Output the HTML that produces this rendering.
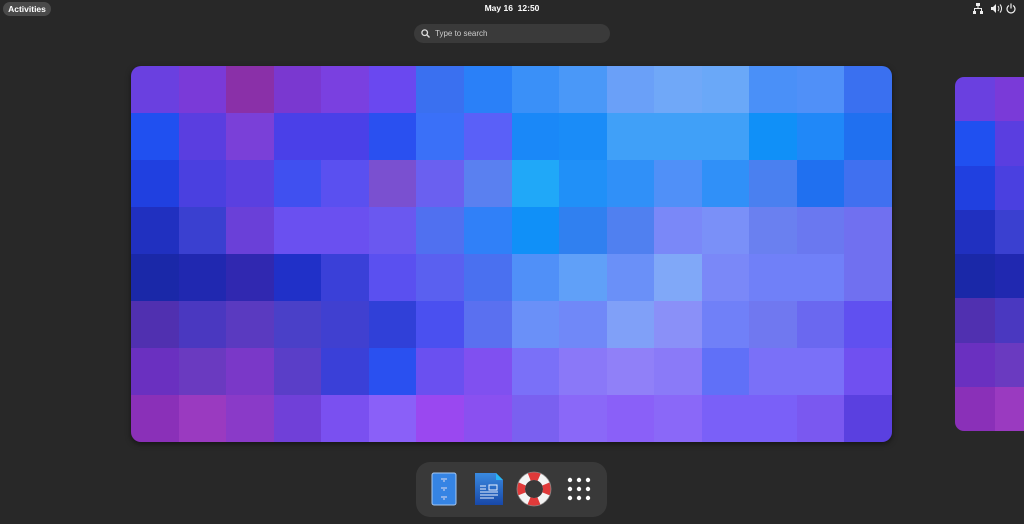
<!DOCTYPE html>
<html><head><meta charset="utf-8"><style>
*{margin:0;padding:0;box-sizing:border-box}
body{width:1024px;height:524px;background:#282828;position:relative;overflow:hidden;font-family:"Liberation Sans",sans-serif;color:#fff}
.act{position:absolute;left:3px;top:2px;width:48px;height:14px;border-radius:7px;background:#4a4a4a;font-size:8.5px;font-weight:bold;line-height:14px;text-align:center}
.clock{position:absolute;left:0;width:1024px;top:3px;text-align:center;font-size:8.5px;font-weight:bold}
.search{position:absolute;left:414px;top:24px;width:196px;height:19px;border-radius:10px;background:#3a3a3a;font-size:8px;color:#ccc;line-height:19px;padding-left:21px}
.grid{position:absolute;display:grid;overflow:hidden}
.main{left:131px;top:66px;width:761px;height:376px;border-radius:10px;grid-template-columns:repeat(16,1fr);grid-template-rows:repeat(8,1fr);box-shadow:0 2px 6px rgba(0,0,0,.5)}
.side{left:955px;top:77px;width:80px;height:354px;border-radius:9px;grid-template-columns:repeat(2,1fr);grid-template-rows:repeat(8,1fr)}
.dock{position:absolute;left:416px;top:462px;width:191px;height:55px;border-radius:14px;background:#393939}
</style></head><body>
<div class="act">Activities</div>
<div class="clock">May 16&nbsp; 12:50</div>
<svg style="position:absolute;left:973px;top:3px" width="45" height="11" viewBox="0 0 45 11">
<g fill="#eee"><rect x="3" y="0" width="4" height="3"/><rect x="4.5" y="3" width="1" height="3"/><rect x="1" y="5" width="8" height="1"/><rect x="1" y="5" width="1" height="3"/><rect x="8" y="5" width="1" height="3"/><rect x="0" y="8" width="3" height="3"/><rect x="7" y="8" width="3" height="3"/>
<path d="M18 4h2l3-3v9l-3-3h-2z"/></g>
<path d="M25 3a4 4 0 0 1 0 5M27 1.5a6 6 0 0 1 0 8" stroke="#eee" fill="none" stroke-width="1"/>
<path d="M36 2.5a4 4 0 1 0 4 0M38 0.5v5" stroke="#eee" fill="none" stroke-width="1.2"/>
</svg>
<div class="search"><svg style="position:absolute;left:7px;top:5px" width="9" height="9"><circle cx="3.7" cy="3.7" r="2.8" stroke="#ddd" stroke-width="1.3" fill="none"/><path d="M5.8 5.8L8.5 8.5" stroke="#ddd" stroke-width="1.4"/></svg>Type to search</div>

<div class="grid main">
<div style="background:#6a40e0"></div><div style="background:#7a3ad8"></div><div style="background:#8a30a8"></div><div style="background:#7a38d0"></div><div style="background:#7a40e0"></div><div style="background:#6a48f0"></div><div style="background:#3a70f0"></div><div style="background:#2a80f8"></div><div style="background:#3a90f8"></div><div style="background:#4a98f8"></div><div style="background:#6aa0f8"></div><div style="background:#70a8f8"></div><div style="background:#6aa8f8"></div><div style="background:#4a90f8"></div><div style="background:#5090f8"></div><div style="background:#3a70f0"></div>
<div style="background:#2050f0"></div><div style="background:#5a3ee0"></div><div style="background:#7a40d8"></div><div style="background:#4a40e8"></div><div style="background:#4a40e8"></div><div style="background:#2a50f0"></div><div style="background:#3a70f8"></div><div style="background:#5a60f8"></div><div style="background:#1a88f8"></div><div style="background:#1a8cf8"></div><div style="background:#40a0f8"></div><div style="background:#40a0f8"></div><div style="background:#40a0f8"></div><div style="background:#1090f8"></div><div style="background:#2088f8"></div><div style="background:#2070f0"></div>
<div style="background:#2040e0"></div><div style="background:#4a40e0"></div><div style="background:#5a40e0"></div><div style="background:#4050f0"></div><div style="background:#5a50f0"></div><div style="background:#7a50d0"></div><div style="background:#6a60f0"></div><div style="background:#5a80f0"></div><div style="background:#20a8f8"></div><div style="background:#2090f8"></div><div style="background:#3090f8"></div><div style="background:#5090f8"></div><div style="background:#3090f8"></div><div style="background:#4a80f0"></div><div style="background:#2070f0"></div><div style="background:#4070f0"></div>
<div style="background:#2030c0"></div><div style="background:#3a40d0"></div><div style="background:#6a40d8"></div><div style="background:#6a50f0"></div><div style="background:#6a50f0"></div><div style="background:#6a58f0"></div><div style="background:#5070f0"></div><div style="background:#3080f8"></div><div style="background:#1090f8"></div><div style="background:#3080f0"></div><div style="background:#5080f0"></div><div style="background:#7a88f8"></div><div style="background:#7a90f8"></div><div style="background:#6a80f0"></div><div style="background:#6a78f0"></div><div style="background:#7070f0"></div>
<div style="background:#1a28a8"></div><div style="background:#2028b0"></div><div style="background:#3028b0"></div><div style="background:#2030c8"></div><div style="background:#3a40d8"></div><div style="background:#5a50f0"></div><div style="background:#5a60f0"></div><div style="background:#4a70f0"></div><div style="background:#5090f8"></div><div style="background:#60a0f8"></div><div style="background:#6a90f8"></div><div style="background:#80a8f8"></div><div style="background:#7a88f8"></div><div style="background:#7080f8"></div><div style="background:#7080f8"></div><div style="background:#7070f0"></div>
<div style="background:#5030b0"></div><div style="background:#4a38c0"></div><div style="background:#5a3ac0"></div><div style="background:#4a40c8"></div><div style="background:#4040d0"></div><div style="background:#3040d8"></div><div style="background:#4a50f0"></div><div style="background:#5a70f0"></div><div style="background:#6a90f8"></div><div style="background:#7088f8"></div><div style="background:#80a0f8"></div><div style="background:#8a90f8"></div><div style="background:#7080f8"></div><div style="background:#7078f0"></div><div style="background:#6a68f0"></div><div style="background:#6050f0"></div>
<div style="background:#6a30c0"></div><div style="background:#6a3ac0"></div><div style="background:#7a38c8"></div><div style="background:#5a3ec8"></div><div style="background:#3a40d8"></div><div style="background:#2a50f0"></div><div style="background:#6a50f0"></div><div style="background:#8050f0"></div><div style="background:#7a70f8"></div><div style="background:#8a78f8"></div><div style="background:#9080f8"></div><div style="background:#8a7af8"></div><div style="background:#6070f8"></div><div style="background:#7a70f8"></div><div style="background:#7a70f8"></div><div style="background:#7050f0"></div>
<div style="background:#8a30b8"></div><div style="background:#9a3ac0"></div><div style="background:#8a3ac8"></div><div style="background:#7040d8"></div><div style="background:#7a50f0"></div><div style="background:#8a60f8"></div><div style="background:#9a48f0"></div><div style="background:#8a50f0"></div><div style="background:#7a60f0"></div><div style="background:#8a68f8"></div><div style="background:#8a60f8"></div><div style="background:#8a68f8"></div><div style="background:#7a60f8"></div><div style="background:#7a60f8"></div><div style="background:#7a58f0"></div><div style="background:#5a40e0"></div>
</div>

<div class="grid side">
<div style="background:#6a40e0"></div><div style="background:#7a3ad8"></div>
<div style="background:#2050f0"></div><div style="background:#5a3ee0"></div>
<div style="background:#2040e0"></div><div style="background:#4a40e0"></div>
<div style="background:#2030c0"></div><div style="background:#3a40d0"></div>
<div style="background:#1a28a8"></div><div style="background:#2028b0"></div>
<div style="background:#5030b0"></div><div style="background:#4a38c0"></div>
<div style="background:#6a30c0"></div><div style="background:#6a3ac0"></div>
<div style="background:#8a30b8"></div><div style="background:#9a3ac0"></div>
</div>

<div class="dock"></div>
<svg style="position:absolute;left:416px;top:462px" width="191" height="55" viewBox="0 0 191 55">
<rect x="16" y="11" width="24" height="32" rx="2" fill="#3584e4" stroke="#a8c8f0" stroke-width="1"/>
<g stroke="#dde" stroke-width="1"><path d="M25 17h6M25 26h6M25 35h6"/><path d="M27 19h2M27 28h2M27 37h2"/></g>
<path d="M59 11h21l7 7v25H59z" fill="#1a60c0"/><path d="M59 11h21l7 7v25H59z" fill="url(#g)"/>
<defs><linearGradient id="g" x1="0" y1="0" x2="0" y2="1"><stop offset="0" stop-color="#3a8ae0"/><stop offset="1" stop-color="#1848a8"/></linearGradient></defs>
<path d="M80 11l7 7h-7z" fill="#29b6f6"/>
<g stroke="#e8f0ff" stroke-width="1"><path d="M64 30h18M64 33h18M64 36h14M64 24h6M64 27h6"/></g><rect x="73" y="23" width="8" height="5" fill="none" stroke="#e8f0ff"/>
<circle cx="118" cy="27" r="13" fill="none" stroke="#f4f4f4" stroke-width="8"/>
<g stroke="#e03a3a" stroke-width="8" fill="none" stroke-dasharray="10.2 10.2"><circle cx="118" cy="27" r="13" transform="rotate(-23 118 27)"/></g>
<circle cx="118" cy="27" r="17" fill="none" stroke="#888" stroke-width=".8"/>
<g fill="#fff"><circle cx="154" cy="18" r="2.2"/><circle cx="163" cy="18" r="2.2"/><circle cx="172" cy="18" r="2.2"/><circle cx="154" cy="27" r="2.2"/><circle cx="163" cy="27" r="2.2"/><circle cx="172" cy="27" r="2.2"/><circle cx="154" cy="36" r="2.2"/><circle cx="163" cy="36" r="2.2"/><circle cx="172" cy="36" r="2.2"/></g>
</svg>
</body></html>
